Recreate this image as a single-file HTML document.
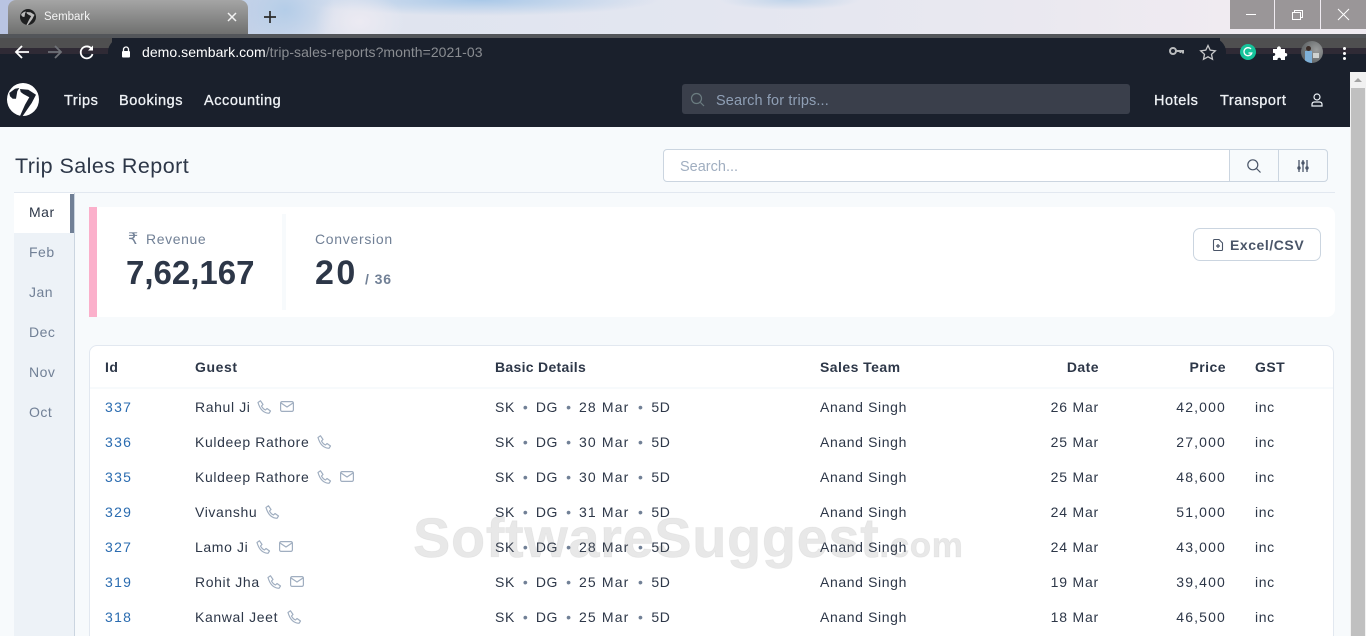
<!DOCTYPE html>
<html><head><meta charset="utf-8"><style>
*{box-sizing:border-box}
html,body{margin:0;padding:0;background:#fff;font-family:"Liberation Sans",sans-serif;color:#2d3748}
#w{position:absolute;left:0;top:0;width:1372px;height:636px;overflow:hidden;background:#fff}
.a{position:absolute;white-space:nowrap}
.t{position:absolute;white-space:nowrap;font-size:14px;line-height:20px;letter-spacing:.62px;color:#2d3748}
.th{font-weight:bold;letter-spacing:.45px}
.r{text-align:right}
.q{letter-spacing:1.15px}
.e{letter-spacing:.8px}
.l{color:#2b6cb0;letter-spacing:1.3px}
.n{font-size:14.5px;letter-spacing:.55px;line-height:20px;top:91px;position:absolute;color:#eef1f5;-webkit-text-stroke:.3px #eef1f5}
.m{position:absolute;left:14px;width:56px;height:40px;font-size:14px;letter-spacing:.5px;line-height:38px;padding-left:15px;color:#718096}
.d{color:#718096;padding:0 8px;letter-spacing:0}
.f{padding:0 8.5px}
svg{position:absolute;overflow:visible}
.i{fill:none;stroke:#a0aec0;stroke-width:1.2;stroke-linecap:round;stroke-linejoin:round}
</style></head><body><div id="w">
<div class="a" style="left:0;top:0;width:1366px;height:34px;background:radial-gradient(ellipse 45px 30px at 360px 22px,#eceaf2,transparent),radial-gradient(ellipse 180px 16px at 480px 0,#a9c8e8,transparent),radial-gradient(ellipse 50px 40px at 285px 10px,#b4cde8,transparent),radial-gradient(ellipse 70px 10px at 790px 0,#c0d4ea,transparent),linear-gradient(90deg,#b9c4e2 0,#c6d2e8 250px,#dfe4ef 350px,#e3e6f0 700px,#e9e8f0 1000px,#f0ebf1 1230px)"></div>
<div class="a" style="left:8px;top:0;width:240px;height:34px;border-radius:8px 8px 0 0;background:linear-gradient(#a5a5a5,#6f706f)"></div>
<div class="a" style="left:44px;top:9px;font-size:11.5px;line-height:16px;color:#f4f4f4">Sembark</div>
<div class="a" style="left:20px;top:9px;width:16px;height:16px;border-radius:50%;background:#1f2021"></div>
<svg style="left:20px;top:9px" width="16" height="16"><g transform="scale(.5)" fill="#bbb"><path d="M2.300 10L8 5.700L12.300 5L10.300 8.300L9 15.700H5.700L3 13.300Z"/><path d="M13 6L21.300 6.700L29 11.700L24.700 20L15.700 32L13 32L18 21.700L22.300 14.300L16.300 11L13.700 9Z"/></g></svg>
<svg style="left:227px;top:12px" width="10" height="10"><path d="M1 1L9 9M9 1L1 9" stroke="#f2f2f2" stroke-width="1.500"/></svg>
<svg style="left:264px;top:11px" width="12" height="12"><path d="M6 0V12M0 6H12" stroke="#2b2b2b" stroke-width="1.700"/></svg>
<div class="a" style="left:1230px;top:0;width:136px;height:29px;background:#9a9698"></div>
<div class="a" style="left:1274px;top:0;width:1px;height:29px;background:#f0ebf1"></div>
<div class="a" style="left:1320px;top:0;width:1px;height:29px;background:#f0ebf1"></div>
<svg style="left:1245px;top:9px" width="90" height="12"><path d="M1 5.500H11" stroke="#fff" stroke-width="1"/><path d="M47.500 3.500H55.500V10.500H47.500ZM49.500 3.500V1.500H57.500V8.500H55.500" stroke="#fff" fill="none"/><path d="M93 0L104 11M104 0L93 11" stroke="#fff"/></svg>
<div class="a" style="left:0;top:34px;width:1366px;height:4px;background:#53565a"></div>
<div class="a" style="left:0;top:38px;width:1366px;height:34px;background:#1a202c"></div>
<div class="a" style="left:0;top:38px;width:112px;height:10px;background:#4f4f50"></div>
<div class="a" style="left:0;top:48px;width:112px;height:6px;background:#2f2a35"></div>
<div class="a" style="left:1220px;top:38px;width:146px;height:10px;background:#4f4f50"></div>
<div class="a" style="left:1220px;top:48px;width:146px;height:6px;background:#2f2a35"></div>
<div class="a" style="left:108px;top:38px;width:1118px;height:34px;border-radius:14px 14px 0 0;background:#1a202c"></div>
<svg style="left:14px;top:44px" width="80" height="16"><path d="M15 8H2M8 2L2 8L8 14" stroke="#fff" stroke-width="1.800" fill="none"/><path d="M47 8H34M41 2L47 8L41 14" stroke="#6f7278" stroke-width="1.800" fill="none"/><path d="M78 5.500A6 6 0 1 0 78.500 10" stroke="#fff" stroke-width="1.800" fill="none"/><path d="M79 1.500V6.500H74Z" fill="#fff"/></svg>
<svg style="left:121px;top:46px" width="10" height="12"><path d="M2.500 5V3.500A2.500 2.500 0 0 1 7.500 3.500V5" stroke="#fff" fill="none" stroke-width="1.300"/><rect x="1" y="5" width="8" height="6.500" rx="1" fill="#fff"/></svg>
<div class="a" style="left:142px;top:43px;font-size:14px;line-height:18px;letter-spacing:.05px;color:#fff">demo.sembark.com<span style="color:#8a8d92">/trip-sales-reports?month=2021-03</span></div>
<svg style="left:1169px;top:45px" width="50" height="16"><circle cx="4" cy="6" r="3" stroke="#b9bbbd" stroke-width="2" fill="none"/><path d="M7 6H14V8.500M11.500 6V8" stroke="#b9bbbd" stroke-width="2" fill="none"/><path d="M39 .5L41.200 5.200L46.300 5.800L42.500 9.300L43.500 14.300L39 11.800L34.500 14.300L35.500 9.300L31.700 5.800L36.800 5.200Z" stroke="#c7c8ca" stroke-width="1.300" fill="none"/></svg>
<div class="a" style="left:1240px;top:44px;width:16px;height:16px;border-radius:50%;background:#15c39a"></div>
<svg style="left:1243px;top:47px" width="10" height="10"><path d="M8 2A4 4 0 1 0 8.800 6H5.500" stroke="#fff" fill="none" stroke-width="1.300"/></svg>
<svg style="left:1272px;top:45px" width="16" height="15"><path d="M1 4H5C4.500 1 9 0 9 4H13V8C16 7.500 16 12 13 11.500V15H9C9.500 12 5 12 5.500 15H1V11C4 11.500 4 7 1 8Z" fill="#fff"/></svg>
<div class="a" style="left:1301px;top:41px;width:22px;height:22px;border-radius:50%;overflow:hidden;background:radial-gradient(circle at 70% 40%,#9a9c9c,#6a6e70 60%,#55595c)">
<div class="a" style="left:4px;top:10px;width:7px;height:12px;background:#7eb0d8"></div>
<div class="a" style="left:5px;top:5px;width:5px;height:5px;border-radius:50%;background:#3a2c28"></div>
<div class="a" style="left:12px;top:12px;width:6px;height:5px;background:#cfd2d0"></div>
</div>
<div class="a" style="left:1343px;top:47px;width:3px;height:3px;border-radius:50%;background:#fff;box-shadow:0 5px #fff,0 10px #fff"></div>

<div class="a" style="left:0;top:72px;width:1366px;height:55px;background:#1a202c"></div>
<div class="a" style="left:7px;top:83px;width:32px;height:33px;border-radius:50%;background:#fff"></div>
<svg style="left:7px;top:83px" width="32" height="33"><path d="M2.300 10L8 5.700L12.300 5L10.300 8.300L9 15.700H5.700L3 13.300Z" fill="#1a202c"/><path d="M13 6L21.300 6.700L29 11.700L24.700 20L15.700 33L13 33L18 21.700L22.300 14.300L16.300 11L13.700 9Z" fill="#1a202c"/></svg>
<div class="n" style="left:64px">Trips</div><div class="n" style="left:119px">Bookings</div><div class="n" style="left:204px">Accounting</div>
<div class="a" style="left:682px;top:84px;width:448px;height:30px;border-radius:3px;background:#3a3f4b"></div>
<svg style="left:690px;top:92px" width="16" height="16"><circle cx="6.500" cy="6.500" r="5" stroke="#6b7c80" fill="none" stroke-width="1.200"/><path d="M10.500 10.500L14 14" stroke="#6b7c80" stroke-width="1.200"/></svg>
<div class="a" style="left:716px;top:91px;font-size:14.500px;line-height:20px;letter-spacing:.13px;color:#8f9fb5">Search for trips...</div>
<div class="n" style="left:1154px">Hotels</div><div class="n" style="left:1220px">Transport</div>
<svg style="left:1311px;top:93px" width="12" height="14"><circle cx="6" cy="4" r="3" stroke="#edf2f7" stroke-width="1.200" fill="none"/><path d="M1 13V11.500Q1 9 3.500 9H8.500Q11 9 11 11.500V13Z" stroke="#edf2f7" stroke-width="1.200" fill="none"/></svg>

<div class="a" style="left:0;top:127px;width:1350px;height:509px;background:#f7fafc"></div>
<div class="a" style="left:1350px;top:72px;width:16px;height:564px;background:#f1f1f1"></div>
<div class="a" style="left:1351px;top:88px;width:14px;height:548px;background:#c0c0c0"></div>
<svg style="left:1353px;top:77px" width="10" height="6"><path d="M5 1L9 5H1Z" fill="#a3a3a3"/></svg>

<div class="a" style="left:15px;top:153px;font-size:21.500px;line-height:26px;letter-spacing:.45px;color:#2d3748">Trip Sales Report</div>
<div class="a" style="left:663px;top:149px;width:567px;height:33px;border:1px solid #cbd5e0;border-radius:4px 0 0 4px;background:#fff"></div>
<div class="a" style="left:680px;top:157px;font-size:14.500px;line-height:20px;letter-spacing:0;color:#a0aec0">Search...</div>
<div class="a" style="left:1229px;top:149px;width:50px;height:33px;border:1px solid #cbd5e0;background:#f7fafc"></div>
<div class="a" style="left:1278px;top:149px;width:50px;height:33px;border:1px solid #cbd5e0;border-radius:0 4px 4px 0;background:#f7fafc"></div>
<svg style="left:1247px;top:159px" width="14" height="14"><circle cx="5.800" cy="5.800" r="5" stroke="#4a5568" fill="none" stroke-width="1.200"/><path d="M9.500 9.500L13.500 13.500" stroke="#4a5568" stroke-width="1.200"/></svg>
<svg style="left:1297px;top:160px" width="12" height="12"><path d="M2 0V12M6 0V12M10 0V12" stroke="#4a5568" stroke-width="1.300"/><circle cx="2" cy="8" r="1.700" fill="#4a5568"/><circle cx="6" cy="3" r="1.700" fill="#4a5568"/><circle cx="10" cy="8" r="1.700" fill="#4a5568"/></svg>
<div class="a" style="left:14px;top:192px;width:1321px;height:1px;background:#e2e8f0"></div>

<div class="a" style="left:14px;top:193px;width:60px;height:443px;background:#edf2f7"></div>
<div class="a" style="left:74px;top:193px;width:1px;height:443px;background:#cbd5e0"></div>
<div class="a" style="left:14px;top:193px;width:60px;height:40px;background:#fff"></div>
<div class="a" style="left:70px;top:194px;width:4px;height:39px;background:#718096"></div>
<div class="m" style="top:193px;color:#2d3748">Mar</div><div class="m" style="top:233px">Feb</div><div class="m" style="top:273px">Jan</div><div class="m" style="top:313px">Dec</div><div class="m" style="top:353px">Nov</div><div class="m" style="top:393px">Oct</div>

<div class="a" style="left:89px;top:207px;width:1246px;height:110px;background:#fff;border-radius:0 8px 8px 0"></div>
<div class="a" style="left:89px;top:207px;width:8px;height:110px;background:#fbb0cb"></div>
<div class="a" style="left:282px;top:214px;width:4px;height:96px;background:#f7fafc"></div>
<div class="a" style="left:128px;top:232px;font-size:16px;line-height:16px;color:#718096">&#8377;</div>
<div class="a" style="left:146px;top:231px;font-size:14px;line-height:16px;letter-spacing:.6px;color:#718096">Revenue</div>
<div class="a" style="left:126px;top:254px;font-size:33px;line-height:38px;font-weight:bold;letter-spacing:0;color:#2d3748">7,62,167</div>
<div class="a" style="left:315px;top:231px;font-size:14px;line-height:16px;letter-spacing:.7px;color:#718096">Conversion</div>
<div class="a" style="left:315px;top:254px;font-size:34px;line-height:38px;font-weight:bold;letter-spacing:2.500px;color:#2d3748">20</div>
<div class="a" style="left:365px;top:271px;font-size:14px;line-height:16px;font-weight:bold;letter-spacing:.9px;color:#718096">/ 36</div>
<div class="a" style="left:1193px;top:228px;width:128px;height:33px;border:1px solid #cbd5e0;border-radius:7px;background:#fff"></div>
<svg style="left:1213px;top:239px" width="10" height="12"><path d="M.5 1.500Q.5 .5 1.500 .5H6L9.500 4V10.500Q9.500 11.500 8.500 11.500H1.500Q.5 11.500 .5 10.500Z" fill="none" stroke="#4a5568" stroke-width="1.100"/><path d="M5 5V9M3 7H7" stroke="#4a5568" stroke-width="1.200"/></svg>
<div class="a" style="left:1230px;top:236px;font-size:14px;line-height:18px;font-weight:bold;letter-spacing:.55px;color:#4a5568">Excel/CSV</div>

<div class="a" style="left:89px;top:345px;width:1245px;height:300px;background:#fff;border:1px solid #e2e8f0;border-radius:8px"></div>
<div class="a" style="left:90px;top:387px;width:1243px;height:2px;background:#f7fafc"></div>

<div class="t th" style="left:105px;top:357px">Id</div><div class="t th" style="left:195px;top:357px;letter-spacing:.6px">Guest</div><div class="t th" style="left:495px;top:357px;letter-spacing:.3px">Basic Details</div><div class="t th" style="left:820px;top:357px">Sales Team</div><div class="t th r" style="right:273px;top:357px">Date</div><div class="t th r" style="right:146px;top:357px">Price</div><div class="t th" style="left:1255px;top:357px">GST</div>

<div class="t l" style="left:105px;top:397px">337</div><div class="t" style="left:195px;top:397px">Rahul Ji</div>
<svg class="i" style="left:257px;top:400px" width="14" height="14"><path d="M1 2.500L3.500 .8L6 4.500L4.500 6Q6 9 8.500 10L10 8.500L13.500 11L12 13.300Q4 13 1 2.500Z"/></svg>
<svg class="i" style="left:280px;top:401px" width="14" height="11"><rect x=".6" y=".6" width="12.800" height="9.800" rx="1.500"/><path d="M1 2L7 6L13 2"/></svg>
<div class="t" style="left:495px;top:397px">SK<span class="d">•</span>DG<span class="d">•</span><span class="q">28 Mar</span><span class="d f">•</span>5D</div><div class="t" style="left:820px;top:397px">Anand Singh</div><div class="t r e" style="right:273px;top:397px">26 Mar</div><div class="t r q" style="right:146px;top:397px">42,000</div><div class="t" style="left:1255px;top:397px">inc</div>

<div class="t l" style="left:105px;top:432px">336</div><div class="t" style="left:195px;top:432px">Kuldeep Rathore</div>
<svg class="i" style="left:317px;top:435px" width="14" height="14"><path d="M1 2.500L3.500 .8L6 4.500L4.500 6Q6 9 8.500 10L10 8.500L13.500 11L12 13.300Q4 13 1 2.500Z"/></svg>
<div class="t" style="left:495px;top:432px">SK<span class="d">•</span>DG<span class="d">•</span><span class="q">30 Mar</span><span class="d f">•</span>5D</div><div class="t" style="left:820px;top:432px">Anand Singh</div><div class="t r e" style="right:273px;top:432px">25 Mar</div><div class="t r q" style="right:146px;top:432px">27,000</div><div class="t" style="left:1255px;top:432px">inc</div>

<div class="t l" style="left:105px;top:467px">335</div><div class="t" style="left:195px;top:467px">Kuldeep Rathore</div>
<svg class="i" style="left:317px;top:470px" width="14" height="14"><path d="M1 2.500L3.500 .8L6 4.500L4.500 6Q6 9 8.500 10L10 8.500L13.500 11L12 13.300Q4 13 1 2.500Z"/></svg>
<svg class="i" style="left:340px;top:471px" width="14" height="11"><rect x=".6" y=".6" width="12.800" height="9.800" rx="1.500"/><path d="M1 2L7 6L13 2"/></svg>
<div class="t" style="left:495px;top:467px">SK<span class="d">•</span>DG<span class="d">•</span><span class="q">30 Mar</span><span class="d f">•</span>5D</div><div class="t" style="left:820px;top:467px">Anand Singh</div><div class="t r e" style="right:273px;top:467px">25 Mar</div><div class="t r q" style="right:146px;top:467px">48,600</div><div class="t" style="left:1255px;top:467px">inc</div>

<div class="t l" style="left:105px;top:502px">329</div><div class="t" style="left:195px;top:502px">Vivanshu</div>
<svg class="i" style="left:265px;top:505px" width="14" height="14"><path d="M1 2.500L3.500 .8L6 4.500L4.500 6Q6 9 8.500 10L10 8.500L13.500 11L12 13.300Q4 13 1 2.500Z"/></svg>
<div class="t" style="left:495px;top:502px">SK<span class="d">•</span>DG<span class="d">•</span><span class="q">31 Mar</span><span class="d f">•</span>5D</div><div class="t" style="left:820px;top:502px">Anand Singh</div><div class="t r e" style="right:273px;top:502px">24 Mar</div><div class="t r q" style="right:146px;top:502px">51,000</div><div class="t" style="left:1255px;top:502px">inc</div>

<div class="t l" style="left:105px;top:537px">327</div><div class="t" style="left:195px;top:537px">Lamo Ji</div>
<svg class="i" style="left:256px;top:540px" width="14" height="14"><path d="M1 2.500L3.500 .8L6 4.500L4.500 6Q6 9 8.500 10L10 8.500L13.500 11L12 13.300Q4 13 1 2.500Z"/></svg>
<svg class="i" style="left:279px;top:541px" width="14" height="11"><rect x=".6" y=".6" width="12.800" height="9.800" rx="1.500"/><path d="M1 2L7 6L13 2"/></svg>
<div class="t" style="left:495px;top:537px">SK<span class="d">•</span>DG<span class="d">•</span><span class="q">28 Mar</span><span class="d f">•</span>5D</div><div class="t" style="left:820px;top:537px">Anand Singh</div><div class="t r e" style="right:273px;top:537px">24 Mar</div><div class="t r q" style="right:146px;top:537px">43,000</div><div class="t" style="left:1255px;top:537px">inc</div>

<div class="t l" style="left:105px;top:572px">319</div><div class="t" style="left:195px;top:572px">Rohit Jha</div>
<svg class="i" style="left:267px;top:575px" width="14" height="14"><path d="M1 2.500L3.500 .8L6 4.500L4.500 6Q6 9 8.500 10L10 8.500L13.500 11L12 13.300Q4 13 1 2.500Z"/></svg>
<svg class="i" style="left:290px;top:576px" width="14" height="11"><rect x=".6" y=".6" width="12.800" height="9.800" rx="1.500"/><path d="M1 2L7 6L13 2"/></svg>
<div class="t" style="left:495px;top:572px">SK<span class="d">•</span>DG<span class="d">•</span><span class="q">25 Mar</span><span class="d f">•</span>5D</div><div class="t" style="left:820px;top:572px">Anand Singh</div><div class="t r e" style="right:273px;top:572px">19 Mar</div><div class="t r q" style="right:146px;top:572px">39,400</div><div class="t" style="left:1255px;top:572px">inc</div>

<div class="t l" style="left:105px;top:607px">318</div><div class="t" style="left:195px;top:607px">Kanwal Jeet</div>
<svg class="i" style="left:287px;top:610px" width="14" height="14"><path d="M1 2.500L3.500 .8L6 4.500L4.500 6Q6 9 8.500 10L10 8.500L13.500 11L12 13.300Q4 13 1 2.500Z"/></svg>
<div class="t" style="left:495px;top:607px">SK<span class="d">•</span>DG<span class="d">•</span><span class="q">25 Mar</span><span class="d f">•</span>5D</div><div class="t" style="left:820px;top:607px">Anand Singh</div><div class="t r e" style="right:273px;top:607px">18 Mar</div><div class="t r q" style="right:146px;top:607px">46,500</div><div class="t" style="left:1255px;top:607px">inc</div>

<div class="a" style="left:413px;top:506px;font-size:56px;line-height:64px;font-weight:bold;letter-spacing:.6px;color:rgba(120,120,120,.17);-webkit-text-stroke:.8px rgba(120,120,120,.08)">SoftwareSuggest<span style="font-size:35px">.com</span></div>
</div></body></html>
